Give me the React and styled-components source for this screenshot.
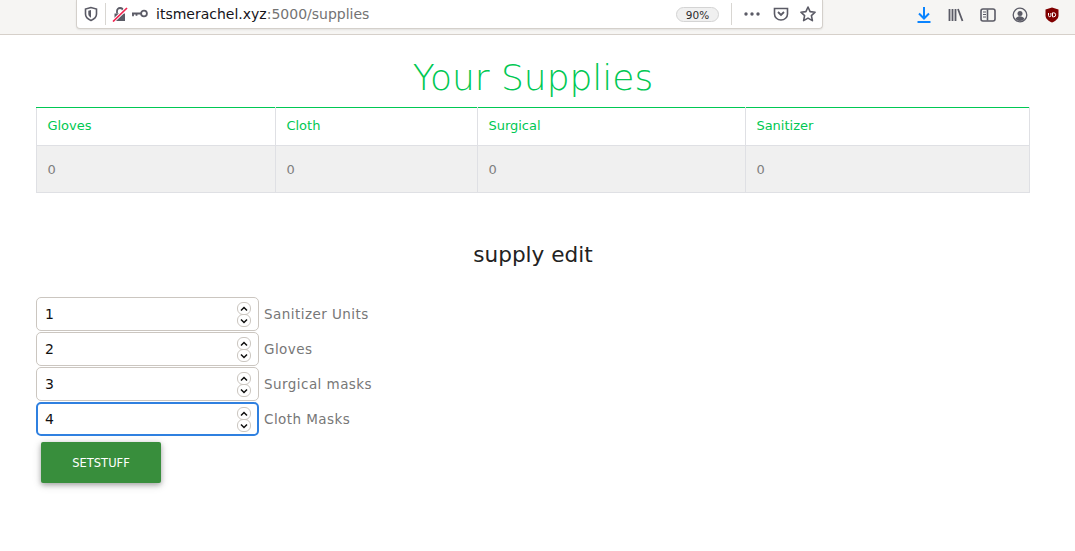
import React from 'react'
import styled, { createGlobalStyle } from 'styled-components'

const GlobalStyle = createGlobalStyle`
  html {
    overflow: hidden;
  }
  body {
    margin: 0;
    padding: 0;
    background: #fff;
    font-family: "DejaVu Sans", sans-serif;
  }
`

const Toolbar = styled.div`
  height: 34px;
  background: #f6f5f3;
  border-bottom: 1px solid #d6d0ca;
  display: flex;
  align-items: flex-start;
  padding: 0 8px 0 76px;
`

const UrlBar = styled.div`
  width: 747px;
  height: 29px;
  box-sizing: border-box;
  background: #fff;
  border: 1px solid #d4d0cb;
  border-top: none;
  border-radius: 0 0 4px 4px;
  display: flex;
  align-items: center;
  padding-left: 6px;
  padding-right: 5px;
  box-shadow: 0 1px 2px rgba(0, 0, 0, 0.08);
`

const Divider = styled.div`
  width: 1px;
  height: 22px;
  background: #d8d6d2;
  margin: ${p => p.$margin};
`

const UrlText = styled.div`
  font-size: 14px;
  color: #15141a;
  margin-left: 8px;
  flex: 1;
  white-space: nowrap;
  span { color: #737373; }
`

const ZoomPill = styled.div`
  width: 43px;
  height: 15px;
  box-sizing: border-box;
  border: 1px solid #d4d4d4;
  border-radius: 8px;
  background: #f0f0f0;
  color: #2b2b2b;
  font-size: 10.5px;
  line-height: 14px;
  text-align: center;
`

const IconSlot = styled.svg`
  display: block;
  flex: none;
  margin: ${p => p.$margin || '0'};
`

const RightIcons = styled.div`
  display: flex;
  align-items: center;
  height: 29px;
  margin-left: 93px;
  gap: 16px;
`

const Main = styled.div`
  padding: 0 45px 68px 36px;
`

const Title = styled.h1`
  margin: 0;
  padding-top: 20px;
  height: 52px;
  font-size: 36px;
  line-height: 46px;
  font-weight: 200;
  color: #00c853;
  text-align: center;
`

const Table = styled.table`
  width: 993px;
  border-collapse: collapse;
  table-layout: fixed;
  font-size: 13px;
  margin-top: 0;
`

const Th = styled.th`
  height: 35px;
  padding: 0 10.4px 2px;
  text-align: left;
  font-weight: 400;
  color: #00c853;
  border: 1px solid #dfe0e4;
  border-top: 1px solid #00c853;
`

const Td = styled.td`
  height: 46px;
  padding: 0 10.4px;
  color: #7f7f7f;
  background: #f0f0f0;
  border: 1px solid #dfe0e4;
`

const SubTitle = styled.h2`
  margin: 48px 0 0;
  height: 27px;
  font-size: 21.6px;
  line-height: 27px;
  font-weight: 400;
  color: #222;
  text-align: center;
`

const Form = styled.form`
  margin-top: 29px;
  display: flex;
  flex-direction: column;
  gap: 1px;
`

const Row = styled.div`
  display: flex;
  align-items: center;
  height: 34px;
`

const NumberBox = styled.div`
  position: relative;
  width: 223px;
  height: 34px;
  box-sizing: border-box;
  border: ${p => (p.$focused ? '2px solid #2f80e0' : '1px solid #cbc6c0')};
  border-radius: 5px;
  background: #fff;
  display: flex;
  align-items: center;
  padding-left: ${p => (p.$focused ? '7px' : '8px')};
  font-size: 14px;
  color: #111;
`

const Spinner = styled.div`
  position: absolute;
  right: ${p => (p.$focused ? '6px' : '7px')};
  top: ${p => (p.$focused ? '3px' : '4px')};
  display: flex;
  flex-direction: column;
`

const SpinButton = styled.div`
  width: 14px;
  height: 13px;
  box-sizing: border-box;
  border: 1px solid #cbc6c0;
  border-radius: 6px;
  display: flex;
  align-items: center;
  justify-content: center;
  background: #fff;
  & + & { margin-top: -1px; }
`

const FieldLabel = styled.label`
  margin-left: 5px;
  font-size: 13.5px;
  letter-spacing: 0.45px;
  color: #777;
`

const SubmitButton = styled.button`
  width: 120px;
  height: 41px;
  margin: 5px 0 0 5px;
  border: none;
  border-radius: 2px;
  background: #388e3c;
  color: #fff;
  font-family: inherit;
  font-size: 11.5px;
  text-transform: uppercase;
  box-shadow: 0 2px 5px rgba(0, 0, 0, 0.26), 0 2px 10px rgba(0, 0, 0, 0.16);
`

const Chevron = ({ up }) => (
  <svg width="8" height="6" viewBox="0 0 8 6">
    <path d={up ? 'M1 4.5 4 1.5 7 4.5' : 'M1 1.5 4 4.5 7 1.5'} fill="none" stroke="#111" strokeWidth="1.5" />
  </svg>
)

const fields = [
  { value: 1, label: 'Sanitizer Units' },
  { value: 2, label: 'Gloves' },
  { value: 3, label: 'Surgical masks' },
  { value: 4, label: 'Cloth Masks', focused: true },
]

const columns = [
  { name: 'Gloves', width: 239 },
  { name: 'Cloth', width: 202 },
  { name: 'Surgical', width: 268 },
  { name: 'Sanitizer', width: 284 },
]

export default function App() {
  return (
    <>
      <GlobalStyle />
      <Toolbar>
        <UrlBar>
          <IconSlot width="16" height="16" viewBox="0 0 16 16">
            <path d="M8 1.500 2.500 3v5c0 3 2.400 5.200 5.500 6.500 3.100-1.300 5.500-3.500 5.500-6.500V3z" fill="none" stroke="#5b5b66" strokeWidth="1.600" />
            <path d="M8 4 5.300 4.700V8c0 1.600 1.100 2.800 2.700 3.700z" fill="#5b5b66" />
          </IconSlot>
          <Divider $margin="0 6px 0 6px" />
          <IconSlot width="16" height="16" viewBox="0 0 16 16">
            <path d="M2.500 7.500h10.500V15H2.500z" fill="#5b5b66" />
            <path d="M5 7.500V5a3 3 0 0 1 6 0v2.500" fill="none" stroke="#5b5b66" strokeWidth="1.800" />
            <path d="M1 15.500 15 2" stroke="#fff" strokeWidth="3.400" />
            <path d="M1 15.500 15 2" stroke="#f0234f" strokeWidth="1.700" />
          </IconSlot>
          <IconSlot width="17" height="10" viewBox="0 0 17 10" $margin="0 0 0 3px">
            <circle cx="13" cy="4.500" r="2.900" fill="none" stroke="#5b5b66" strokeWidth="1.800" />
            <path d="M10 4.500H1M2 4.500v2.800M5.500 4.500v2.300" fill="none" stroke="#5b5b66" strokeWidth="1.800" />
          </IconSlot>
          <UrlText>itsmerachel.xyz<span>:5000/supplies</span></UrlText>
          <ZoomPill>90%</ZoomPill>
          <Divider $margin="0 11px 0 12px" />
          <IconSlot width="18" height="16" viewBox="0 0 18 16">
            <circle cx="3" cy="8" r="1.700" fill="#5b5b66" />
            <circle cx="9" cy="8" r="1.700" fill="#5b5b66" />
            <circle cx="15" cy="8" r="1.700" fill="#5b5b66" />
          </IconSlot>
          <IconSlot width="16" height="16" viewBox="0 0 16 16" $margin="0 0 0 12px">
            <path d="M1.500 2.500h13v5.500a6.500 6 0 0 1-13 0z" fill="none" stroke="#5b5b66" strokeWidth="1.600" />
            <path d="M5 6l3 3 3-3" fill="none" stroke="#5b5b66" strokeWidth="1.800" />
          </IconSlot>
          <IconSlot width="18" height="18" viewBox="0 0 18 18" $margin="0 0 0 10px">
            <path d="M9 2l2.100 4.600 5 .6-3.700 3.400 1 5L9 13.100 4.600 15.600l1-5L1.900 7.200l5-.6z" fill="none" stroke="#5b5b66" strokeWidth="1.600" strokeLinejoin="round" />
          </IconSlot>
        </UrlBar>
        <RightIcons>
          <IconSlot width="16" height="18" viewBox="0 0 16 18">
            <path d="M8 1v11M3 7.500l5 5 5-5" fill="none" stroke="#0a84ff" strokeWidth="2" />
            <path d="M1.500 16h13" stroke="#0a84ff" strokeWidth="2" />
          </IconSlot>
          <IconSlot width="16" height="16" viewBox="0 0 16 16">
            <path d="M1.500 2v12M4.500 2v12M7.500 2v12M10 2l4.500 12" fill="none" stroke="#5b5b66" strokeWidth="1.800" />
          </IconSlot>
          <IconSlot width="16" height="16" viewBox="0 0 16 16">
            <rect x="1" y="2" width="14" height="12" rx="2" fill="none" stroke="#5b5b66" strokeWidth="1.600" />
            <path d="M7.500 2.500v11" stroke="#5b5b66" strokeWidth="1.600" />
            <path d="M3 5h3M3 7.500h3M3 10h3" stroke="#5b5b66" strokeWidth="1.200" />
          </IconSlot>
          <IconSlot width="16" height="16" viewBox="0 0 16 16">
            <circle cx="8" cy="8" r="6.800" fill="none" stroke="#5b5b66" strokeWidth="1.300" />
            <circle cx="8" cy="6.500" r="2.500" fill="#5b5b66" />
            <path d="M3.500 12c1-2 2.800-2.800 4.500-2.800s3.500.8 4.500 2.800a6 6 0 0 1-9 0z" fill="#5b5b66" />
          </IconSlot>
          <IconSlot width="16" height="16" viewBox="0 0 16 16">
            <path d="M8 .5 1.500 2.500v6c0 3 2.800 5.500 6.500 7 3.700-1.500 6.500-4 6.500-7v-6z" fill="#800000" />
            <path d="M4.500 6v2.500a1.200 1.200 0 0 0 2.400 0V6M8.500 5.800v4h1.200a2 2 0 0 0 0-4z" fill="none" stroke="#fff" strokeWidth="1" />
          </IconSlot>
        </RightIcons>
      </Toolbar>
      <Main>
        <Title>Your Supplies</Title>
        <Table>
          <colgroup>
            {columns.map(c => <col key={c.name} style={{ width: c.width }} />)}
          </colgroup>
          <thead>
            <tr>{columns.map(c => <Th key={c.name}>{c.name}</Th>)}</tr>
          </thead>
          <tbody>
            <tr>{columns.map(c => <Td key={c.name}>0</Td>)}</tr>
          </tbody>
        </Table>
        <SubTitle>supply edit</SubTitle>
        <Form onSubmit={e => e.preventDefault()}>
          {fields.map(f => (
            <Row key={f.label}>
              <NumberBox $focused={f.focused}>
                {f.value}
                <Spinner $focused={f.focused}>
                  <SpinButton><Chevron up /></SpinButton>
                  <SpinButton><Chevron /></SpinButton>
                </Spinner>
              </NumberBox>
              <FieldLabel>{f.label}</FieldLabel>
            </Row>
          ))}
          <SubmitButton type="submit">setstuff</SubmitButton>
        </Form>
      </Main>
    </>
  )
}
